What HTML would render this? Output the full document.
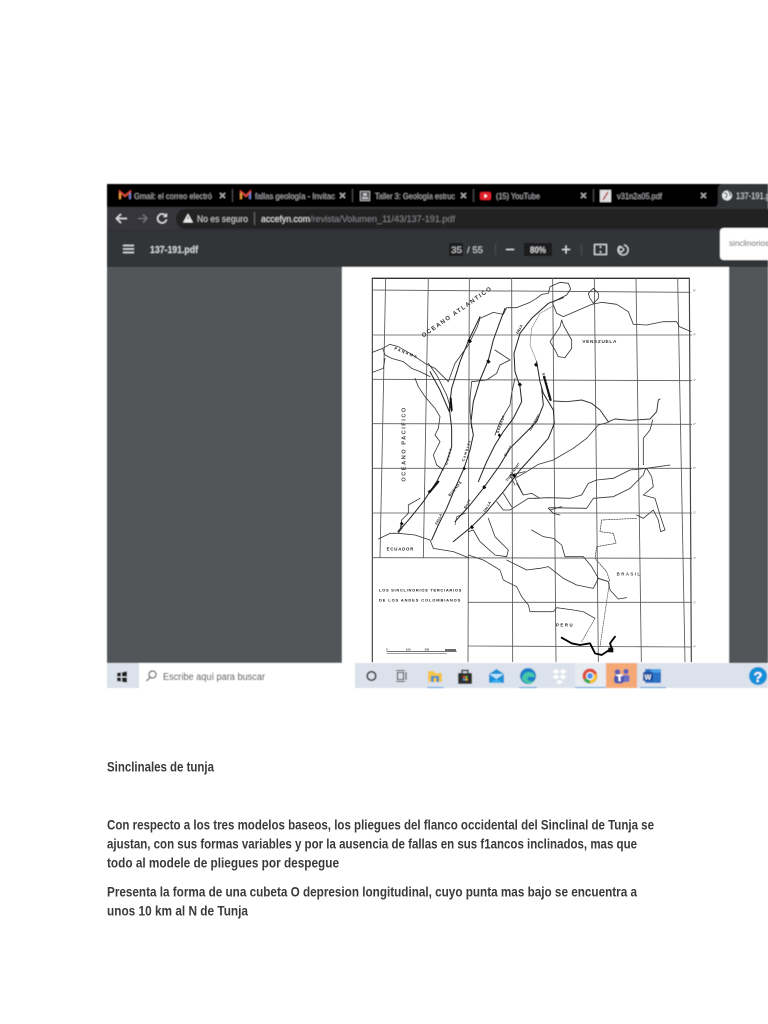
<!DOCTYPE html>
<html lang="es"><head><meta charset="utf-8"><title>Sinclinales de tunja</title>
<style>html,body{margin:0;padding:0;background:#fff;width:768px;height:1024px;overflow:hidden}
svg{display:block}text{font-family:"Liberation Sans",sans-serif}</style></head><body>
<svg width="768" height="1024" viewBox="0 0 768 1024" xmlns="http://www.w3.org/2000/svg">
<defs>
<filter id="b" x="-2%" y="-2%" width="104%" height="104%"><feGaussianBlur stdDeviation="0.5"/></filter>
<filter id="b2" x="-2%" y="-2%" width="104%" height="104%"><feGaussianBlur stdDeviation="0.3"/></filter>
<filter id="b3" x="-2%" y="-2%" width="104%" height="104%"><feGaussianBlur stdDeviation="0.42"/></filter>
</defs>
<rect width="768" height="1024" fill="#fff"/>
<g filter="url(#b)">
<!-- chrome -->
<rect x="107" y="184" width="661" height="24" fill="#020203"/>
<rect x="107" y="207" width="661" height="24" fill="#35363a"/>
<rect x="107" y="230" width="661" height="38" fill="#323639"/>
<rect x="107" y="267" width="235" height="396" fill="#525659"/>
<rect x="729" y="267" width="39" height="396" fill="#525659"/>
<rect x="342" y="267" width="387" height="396" fill="#fff"/>
<rect x="107" y="230" width="661" height="1" fill="#2a2b2e"/>
<!-- tabs -->
<g fill="none" stroke="#d8483a" stroke-width="2"><path d="M120 199V192L125 196L130 192V199"/><path d="M241 199V192L246 196L250 192V199"/></g>
<path d="M120 199V193M241 199V193" stroke="#e0aa35" stroke-width="1.600"/>
<path d="M130 199V193M250 199V193" stroke="#4c86e0" stroke-width="1.600"/>
<g font-size="8.400" fill="#a8aaad">
<text x="134" y="199" textLength="78" lengthAdjust="spacingAndGlyphs">Gmail: el correo electró</text>
<text x="255" y="199" textLength="80" lengthAdjust="spacingAndGlyphs">fallas geología - Invitac</text>
<text x="375" y="199" textLength="80" lengthAdjust="spacingAndGlyphs">Taller 3: Geología estruc</text>
<text x="496" y="199" textLength="44" lengthAdjust="spacingAndGlyphs">(15) YouTube</text>
<text x="617" y="199" textLength="45" lengthAdjust="spacingAndGlyphs">v31n2a05.pdf</text>
</g>
<g stroke="#bfc0c2" stroke-width="1.200"><path d="M220 193l5 5M225 193l-5 5M340 193l5 5M345 193l-5 5M461 193l5 5M466 193l-5 5M581 193l5 5M586 193l-5 5M701 193l5 5M706 193l-5 5"/></g>
<path d="M232.500 189v13M352.500 189v13M473.500 189v13M593.500 189v13" stroke="#4a4b4e" stroke-width="1"/>
<rect x="360.500" y="191.500" width="9" height="9" fill="#3a3b3d" stroke="#a8a9ab"/><rect x="363" y="193" width="4" height="3" fill="#bfc0c2"/><rect x="362" y="197" width="6" height="2" fill="#bfc0c2"/>
<rect x="480" y="192" width="11" height="8" rx="2" fill="#e2202a"/><path d="M484.500 194v4l3-2z" fill="#fff"/>
<rect x="600" y="190" width="11" height="12" fill="#e0e0e2"/><path d="M603 200l5-8" stroke="#b44a4a" stroke-width="1.500"/>
<path d="M714 207q3 0 4-4v-15q1-4 5-4h45v23z" fill="#323639"/>
<circle cx="727" cy="195.500" r="5" fill="#e8e9ea"/><path d="M724 193q3 0 3 2t-2 3M728 191q3 2 2 5" stroke="#323639" fill="none"/>
<text x="736" y="199" font-size="9" fill="#cfd0d2" textLength="34" lengthAdjust="spacingAndGlyphs">137-191.p</text>
<!-- address -->
<path d="M127 218.500h-10M121 214l-4.500 4.500 4.500 4.500" fill="none" stroke="#dfe0e2" stroke-width="1.500"/>
<path d="M138 218.500h9M143 214.500l4 4-4 4" fill="none" stroke="#77787b" stroke-width="1.300"/>
<path d="M165.500 215.500a4.500 4.500 0 1 0 1 4" fill="none" stroke="#dfe0e2" stroke-width="1.400"/><path d="M167 213v4h-4z" fill="#dfe0e2"/>
<rect x="176" y="209" width="620" height="20" rx="10" fill="#202124"/>
<path d="M188 213.500l5 9h-10z" fill="#e8e9ea"/><rect x="187.500" y="216.500" width="1" height="3" fill="#202124"/>
<text x="197" y="222" font-size="9.500" fill="#c8c9cb" textLength="51" lengthAdjust="spacingAndGlyphs">No es seguro</text>
<path d="M254.500 212v13" stroke="#66676a"/>
<text x="261" y="222" font-size="9.500" fill="#e4e5e6" textLength="49" lengthAdjust="spacingAndGlyphs">accefyn.com</text>
<text x="310" y="222" font-size="9.500" fill="#7f8184" textLength="145" lengthAdjust="spacingAndGlyphs">/revista/Volumen_11/43/137-191.pdf</text>
<!-- toolbar -->
<path d="M123 245.500h11M123 249h11M123 252.500h11" stroke="#dcdddf" stroke-width="1.400"/>
<text x="150" y="253" font-size="10" font-weight="bold" fill="#d2d3d5" textLength="48" lengthAdjust="spacingAndGlyphs">137-191.pdf</text>
<rect x="449" y="243" width="14" height="13" fill="#1a1c1e"/>
<text x="451" y="253" font-size="9.500" fill="#d0d1d3" textLength="11" lengthAdjust="spacingAndGlyphs">35</text>
<text x="467" y="253" font-size="9.500" fill="#d0d1d3" textLength="16" lengthAdjust="spacingAndGlyphs">/ 55</text>
<path d="M495.500 244v11M581.500 244v11" stroke="#4c4f52"/>
<path d="M506 249.500h8M562 249.500h8M566 245.500v8" stroke="#e2e3e5" stroke-width="1.300"/>
<rect x="524" y="243" width="28" height="13" fill="#1a1c1e"/>
<text x="530" y="253" font-size="9.500" font-weight="bold" fill="#d0d1d3" textLength="16" lengthAdjust="spacingAndGlyphs">80%</text>
<rect x="594.500" y="244.500" width="12" height="10" fill="none" stroke="#dcdddf" stroke-width="1.200"/><path d="M600.500 246v2M600.500 251v2" stroke="#dcdddf" stroke-width="1.300"/>
<path d="M624 245a5 5 0 1 1 -4 1" fill="none" stroke="#dcdddf" stroke-width="1.200"/><path d="M618 249.500l3-3 3 3-3 3z" fill="#323639" stroke="#dcdddf"/>
<path d="M768 228h-44q-4 0-4 4v24q0 4 4 4h44z" fill="#fff"/>
<text x="729" y="246" font-size="8.500" fill="#555" textLength="40" lengthAdjust="spacingAndGlyphs">sinclinorios</text>
<!-- taskbar -->
<rect x="107" y="663" width="661" height="25" fill="#dbe2eb"/>
<rect x="139" y="663" width="216" height="25" fill="#fff"/>
<path d="M117 673l4-.6v4.100h-4zM122 672.200l5-.8v5.100h-5zM117 677.500h4v4.100l-4-.6zM122 677.500h5v5.100l-5-.8z" fill="#1a1a1a"/>
<circle cx="152.500" cy="674.500" r="3.600" fill="none" stroke="#333" stroke-width="1.100"/><path d="M150 677.500l-3.500 3.500" stroke="#333" stroke-width="1.200"/>
<text x="163" y="680" font-size="10" fill="#2a2a2a" textLength="102" lengthAdjust="spacingAndGlyphs">Escribe aquí para buscar</text>
<circle cx="371.500" cy="676" r="4.300" fill="none" stroke="#222" stroke-width="1.600"/>
<path d="M397.500 672.500h6v7h-6zM396 670.500h9M396 681.500h9M406 672v8" fill="none" stroke="#333" stroke-width="1.100"/>
<path d="M428 671h6l1 2h7v9h-14z" fill="#f2c544"/><rect x="431" y="676" width="8" height="6" fill="#3e8dc5"/><rect x="433.500" y="678" width="3" height="4" fill="#f2c544"/>
<rect x="427" y="687" width="17" height="1" fill="#5a9bd8"/>
<rect x="458" y="673" width="14" height="11" rx="1" fill="#2d2d2f"/><path d="M462 673v-2.500h6v2.500" fill="none" stroke="#2d2d2f" stroke-width="1.400"/>
<rect x="463" y="676" width="2" height="2" fill="#e2502c"/><rect x="465.500" y="676" width="2" height="2" fill="#7eb93a"/><rect x="463" y="678.500" width="2" height="2" fill="#2c9be0"/><rect x="465.500" y="678.500" width="2" height="2" fill="#f4b920"/>
<path d="M489 674l7.500-5 7.500 5v9h-15z" fill="#1c90d8"/><path d="M489 674l7.500 5 7.500-5" fill="#bfe3f7"/><path d="M489.500 683l7-4 7 4" fill="#3db0ee"/>
<circle cx="528" cy="676" r="8" fill="#1f7fc9"/><path d="M522 679q1-7 7-7 5 0 6 5h-7q-2 3 2 4 2 1 5-1-2 4-6 3.500-5-.5-7-4.500z" fill="#45c8a8"/>
<rect x="519" y="687" width="18" height="1" fill="#5a9bd8"/>
<path d="M556 669l3.500 2.500-3.500 2.500-3.500-2.500zM563 669l3.500 2.500-3.500 2.500-3.500-2.500zM556 674.500l3.500 2.500-3.500 2.500-3.500-2.500zM563 674.500l3.500 2.500-3.500 2.500-3.500-2.500zM559.500 680l3.500 2-3.500 2.200-3.500-2.200z" fill="#fff"/>
<rect x="575" y="663" width="31" height="25" fill="#e6ebf2"/>
<circle cx="590" cy="676" r="7.500" fill="#dd4b3e"/><path d="M590 676l-6.500 3.700a7.500 7.500 0 0 0 6.500 3.800z" fill="#3ba757"/><path d="M590 676v7.500a7.500 7.500 0 0 0 7-10z" fill="#f3c02e"/><circle cx="590" cy="676" r="3.500" fill="#4d8fe8" stroke="#fff"/>
<rect x="575" y="687" width="31" height="1" fill="#5a9bd8"/>
<rect x="606" y="663" width="31" height="25" fill="#f3a874"/>
<circle cx="626" cy="671.500" r="2.600" fill="#5b60b8"/><circle cx="617.500" cy="672" r="2.800" fill="#5b60b8"/>
<rect x="622" y="675" width="7.500" height="7" rx="2" fill="#6a70c4"/><rect x="614" y="675" width="10" height="8.500" rx="3" fill="#5059b0"/><path d="M616.500 674.500h6v1.800h-2v5h-2v-5h-2z" fill="#fff"/>
<rect x="645" y="669" width="16" height="14" rx="1" fill="#2a73c6"/><rect x="651" y="669" width="10" height="3.500" fill="#4aa3e8"/><rect x="643" y="672" width="10" height="9" rx="1" fill="#1e4f9a"/><text x="644.500" y="679.500" font-size="7" font-weight="bold" fill="#fff">W</text>
<rect x="640" y="687" width="26" height="1" fill="#5a9bd8"/>
<circle cx="758" cy="676" r="9" fill="#1690d8"/><text x="758" y="682" text-anchor="middle" font-size="15" font-weight="bold" fill="#fff">?</text>
</g>

<!-- map -->
<svg x="340" y="265" width="390" height="400" viewBox="0 0 1170 1200" filter="url(#b3)">
<g fill="none" stroke="#3d3d3d" stroke-linejoin="round" stroke-linecap="round">
<g stroke="#5a5a5a" stroke-width="2.600">
<path d="M97 40H1048" stroke-width="4" stroke="#333"/>
<path d="M97 40V1190" stroke-width="3.500" stroke="#444"/>
<path d="M1048 40L1054 1190" stroke-width="3.500" stroke="#444"/>
<path d="M97 75L1050 82M97 210H1055M97 343L1055 347M97 476L1055 478M97 610H1055M97 744H1055M97 878L1055 880M385 1012H1055M385 1143L1055 1146"/>
<path d="M137 40L120 878M265 40L250 878M388 40L384 1190M515 40L518 1190M638 40L648 1190M763 40L775 1190M888 40L904 1190M1013 40L1035 1190"/>
</g>
<!-- coast -->
<g stroke-width="2.400" stroke="#333">
<path d="M97 262L128 250L150 238L175 245L215 268L255 295L285 310L315 340L325 350L345 295L385 240L412 185L420 160L460 142L490 148L500 128L530 128L570 112L590 100L605 88L625 85L630 65L660 52L685 55L692 72L680 90L640 110L638 115L650 145L670 155L705 140L755 118L785 112L830 118L865 140L880 178L920 180L970 170L1010 170L1018 185L1053 200"/>
<path d="M745 85L760 70L775 85L775 100L760 115L750 100Z"/>
<path d="M128 250L135 270L155 280L190 290L215 310L240 320L270 335M135 280L130 310L97 322"/>
<path d="M225 340L235 365L255 395L285 430L300 455L295 490L285 510L300 530L280 570L290 600L310 615"/>
<path d="M265 295L290 330L320 390L335 440"/>
<path d="M665 165L660 185L640 215L630 230L645 255L655 275L675 278L695 250L695 225L670 180L665 165"/>
<path d="M465 255L510 285L480 300L470 325L440 345L395 350L390 400L390 440L395 490"/>
<path d="M525 340L515 385L510 420L480 470L465 510"/>
<path d="M640 408L680 410L725 405L755 415L780 435L805 470L825 462L870 466L930 462L950 440L955 405L960 402" stroke-width="2.800"/>
<path d="M805 472L775 480L740 520L700 550L640 585L595 598L560 620L525 640L550 690L575 685L600 700"/>
<path d="M585 700L625 698L690 700L725 690L745 655L770 645L820 640L870 615L920 610L990 600"/>
<path d="M625 730L630 728L740 730L760 700L820 695L870 670L910 630L915 615L920 610L935 635L940 665L910 690L945 700L960 750L975 795L962 800L955 765L940 735L910 760L890 750"/>
<path d="M625 730L640 745L660 750M630 735L665 725"/>
<path d="M938 465L930 495L910 520L910 600" stroke-dasharray="4 2" stroke-width="2.600"/>
<path d="M115 822L150 805L175 805L225 810L270 825L280 850L340 860L385 878"/>
<path d="M205 720L205 745L185 765L180 795M205 720L240 700"/>
<path d="M445 760L465 815L505 855L500 875L465 870L420 830L400 795L385 800"/>
<path d="M500 885L560 915L600 910L625 905L670 940L710 960L760 970L775 940L805 950"/>
<path d="M575 795L610 815L640 820L665 840L675 875L730 875L755 905L775 940L805 950L810 975L835 1002L860 998"/>
<path d="M470 710L490 735L510 735L565 700L590 700M490 685L515 725M530 655L550 690M555 620L510 630L525 660"/>
<path d="M385 870L430 885L480 915L490 945L530 965L545 995L565 1020L570 1040L640 1040L650 1028L700 1035L730 1040L765 1060" stroke-dasharray="5 2"/>
<path d="M890 760L785 765L780 800L820 805L828 835L770 845L765 880L800 920L810 950" stroke-dasharray="5 3" stroke-width="2"/>
<path d="M765 1060L725 1130M808 955L780 1145" stroke-dasharray="4 3" stroke-width="1.800"/>
<path d="M640 122L600 145L575 190L570 240L590 290" stroke-dasharray="3 3" stroke-width="2" stroke="#666"/>
<path d="M345 780L350 755L375 745" stroke-width="1.800"/>
</g>
<!-- faults -->
<g stroke="#222" stroke-width="3">
<path d="M420 155L385 228L360 290L335 370L328 430L335 490L335 545L320 590L290 650L250 710L210 760L175 800"/>
<path d="M270 320L300 375L328 440"/>
<path d="M495 130L480 170L460 225L445 285L420 345L400 410L393 470L400 510L390 555L372 610L345 670L320 730L295 780L275 825"/>
<path d="M670 98L625 115L575 160L540 205L522 265L525 320L540 365L545 410L520 460L490 500L465 540L440 590L415 650"/>
<path d="M590 290L600 350L610 385L640 435L643 475L625 520L590 560L540 615L490 680L440 740L395 785L340 830"/>
<path d="M605 370L610 420L590 470L550 510L510 550L480 600L430 670L390 720L345 770"/>
</g>
<g stroke="#111" stroke-width="6"><path d="M332 400L335 435M612 335L632 405M270 680L295 650" stroke-dasharray="5 2"/></g>
<!-- Rio bold -->
<path d="M665 1118L695 1135L720 1140L750 1135L765 1165L785 1170L815 1150L810 1135L825 1115" stroke="#000" stroke-width="5.500"/>
</g>
<g fill="#111"><path d="M388 220l8 10-8 5-6-8zM445 282l7 9-7 5-6-8zM540 352l6 8-7 5-6-7zM588 293l6 7-6 6-6-7zM478 505l6 7-6 5-5-7zM432 660l7 8-7 5-5-7zM522 625l8 8-7 6-6-8zM372 605l6 6-6 5-5-6zM395 780l7 7-6 6-6-7zM185 770l6 7-6 5-5-7zM268 675l6 6-6 5-5-6z"/><rect x="805" y="1148" width="15" height="14"/></g>
<g fill="#222" font-weight="bold" font-size="12">
<text transform="translate(250 218) rotate(-35)" font-size="18" textLength="250" fill="#333">OCEANO ATLANTICO</text>
<text transform="translate(196 650) rotate(-90)" font-size="17" textLength="222" fill="#444">OCEANO PACIFICO</text>
<text transform="translate(162 253) rotate(22)" font-size="12" textLength="72">PANAMA</text>
<text x="727" y="234" font-size="14" textLength="102" fill="#333">VENEZUELA</text>
<text x="140" y="856" font-size="13" textLength="80">ECUADOR</text>
<text x="830" y="931" font-size="13" textLength="70" fill="#444">BRASIL</text>
<text x="648" y="1084" font-size="13" textLength="50">PERU</text>
<text x="117" y="979" font-size="12" textLength="247">LOS SINCLINORIOS TERCIARIOS</text>
<text x="117" y="1010" font-size="12" textLength="244">DE LOS ANDES COLOMBIANOS</text>
<text transform="translate(535 208) rotate(-65)" font-size="11" textLength="30">FALLA</text>
<text transform="translate(635 405) rotate(-105)" font-size="11" textLength="85">SEMINOLES</text>
<text transform="translate(572 498) rotate(-60)" font-size="11" textLength="55">Guaicaramo</text>
<text transform="translate(476 505) rotate(-72)" font-size="11" textLength="55">Soapaga</text>
<text transform="translate(498 575) rotate(-60)" font-size="11" textLength="35">Brasil</text>
<text transform="translate(502 650) rotate(-55)" font-size="11" textLength="65">Yopal-Ariari</text>
<text transform="translate(436 742) rotate(-60)" font-size="11" textLength="35">FALLA</text>
<text transform="translate(378 732) rotate(-65)" font-size="11" textLength="30">Boya</text>
<text transform="translate(330 695) rotate(-50)" font-size="11" textLength="55">BUENOS</text>
<text transform="translate(372 590) rotate(-72)" font-size="11" textLength="65">Cambrás</text>
<text transform="translate(322 600) rotate(-75)" font-size="11" textLength="50">Cauca</text>
<text transform="translate(292 780) rotate(-65)" font-size="11" textLength="35">FALLA</text>
<text transform="translate(178 805) rotate(-60)" font-size="11" textLength="25">FALLA</text>
</g>
<g fill="#444" font-size="8">
<text x="1060" y="80">8°</text><text x="1060" y="212">6°</text><text x="1060" y="348">4°</text><text x="1060" y="480">2°</text><text x="1060" y="612">0°</text><text x="1060" y="746">2°</text><text x="1060" y="882">4°</text><text x="1060" y="1016">2°</text><text x="1060" y="1148">4°</text>
</g>
<path d="M140 1160H350" stroke="#222" stroke-width="2"/>
<path d="M140 1166H320" stroke="#666" stroke-width="2"/>
<path d="M315 1155H348" stroke="#222" stroke-width="4"/>
<g fill="#333" font-size="8" font-weight="bold"><text x="138" y="1156">0</text><text x="198" y="1156">100</text><text x="254" y="1156">200</text></g>
</svg>

<!-- document text -->
<g filter="url(#b2)" fill="#1b1b1b" font-size="13.500" font-weight="bold">
<text x="107" y="771.500" textLength="107" lengthAdjust="spacingAndGlyphs" fill-opacity=".88">Sinclinales de tunja</text>
<text x="107" y="829.500" textLength="547" lengthAdjust="spacingAndGlyphs" fill-opacity=".88">Con respecto a los tres modelos baseos, los pliegues del flanco occidental del Sinclinal de Tunja se</text>
<text x="107" y="848.500" textLength="530" lengthAdjust="spacingAndGlyphs" fill-opacity=".88">ajustan, con sus formas variables y por la ausencia de fallas en sus f1ancos inclinados, mas que</text>
<text x="107" y="867.500" textLength="232" lengthAdjust="spacingAndGlyphs" fill-opacity=".88">todo al modele de pliegues por despegue</text>
<text x="107" y="896.500" textLength="530" lengthAdjust="spacingAndGlyphs" fill-opacity=".88">Presenta la forma de una cubeta O depresion longitudinal, cuyo punta mas bajo se encuentra a</text>
<text x="107" y="915.500" textLength="141" lengthAdjust="spacingAndGlyphs" fill-opacity=".88">unos 10 km al N de Tunja</text>
</g>
</svg>
</body></html>
